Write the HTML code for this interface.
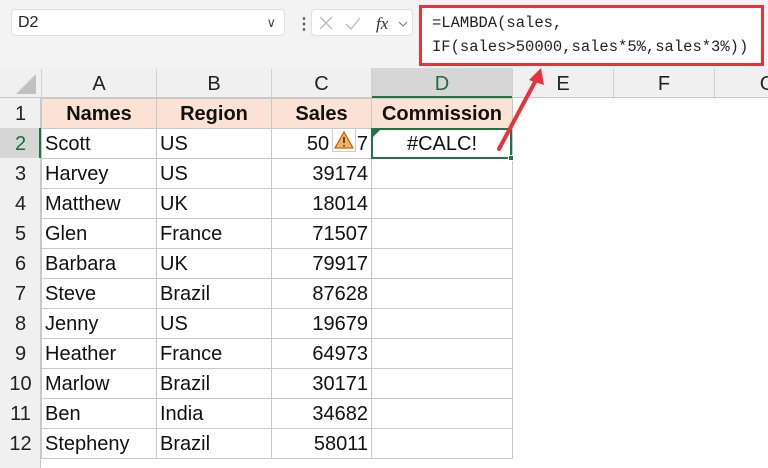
<!DOCTYPE html><html><head><style>
body{margin:0;width:768px;height:468px;overflow:hidden;background:#fff;font-family:"Liberation Sans",sans-serif;position:relative}
.a{position:absolute;box-sizing:border-box}
.c{position:absolute;box-sizing:border-box;font-size:20px;line-height:30px;color:#111;white-space:nowrap;overflow:visible}
</style></head><body>
<div class="a" style="left:0;top:0;width:768px;height:68px;background:#f3f3f3"></div>
<div class="a" style="left:11px;top:9px;width:274px;height:27px;background:#fff;border:1px solid #e0e0e0;border-radius:4px;font-size:16px;line-height:25px;padding-left:6px;color:#222">D2<span style="position:absolute;right:8px;top:0;color:#444;font-size:13px">&#8744;</span></div>
<div class="a" style="left:296px;top:14px;font-size:16px;color:#555;font-weight:bold">&#8942;</div>
<div class="a" style="left:311px;top:9px;width:102px;height:27px;background:#fff;border:1px solid #e0e0e0;border-radius:4px">
<svg width="100" height="27" style="position:absolute;left:0;top:0"><path d="M8 7l12 12M20 7L8 19" stroke="#bbb" stroke-width="1.3" fill="none"/><path d="M34 14l5 5 9-11" stroke="#bbb" stroke-width="1.3" fill="none"/><text x="64" y="19" font-family="Liberation Serif" font-style="italic" font-size="17" fill="#333">fx</text><path d="M87 12l4 4 4-4" stroke="#777" fill="none"/></svg></div>
<div class="a" style="left:419px;top:5px;width:345px;height:61px;background:#fff;border:3px solid #e8333b"></div>
<div class="a" style="left:432px;top:11px;font-family:'Liberation Mono',monospace;font-size:15.5px;line-height:24px;color:#222">=LAMBDA(sales,<br>IF(sales&gt;50000,sales*5%,sales*3%))</div>
<div class="a" style="left:0;top:68px;width:768px;height:30px;background:#f0f0f0;border-bottom:1px solid #c8c8c8"></div>
<div class="a" style="left:0;top:98px;width:41px;height:370px;background:#f0f0f0;border-right:1px solid #c8c8c8"></div>
<div class="a" style="left:371px;top:68px;width:141px;height:30px;background:#d6d6d6;border-bottom:2px solid #217346"></div>
<div class="a" style="left:0;top:128px;width:41px;height:30px;background:#d6d6d6;border-right:2px solid #217346"></div>
<svg class="a" style="left:14px;top:72px" width="24" height="24"><path d="M22 2V22H2Z" fill="#c0c0c0"/></svg>
<div id="g"></div>
<script>
var cols=[41,156,271,371,512,613,714,820],names=['A','B','C','D','E','F','G'];
var h='';
for(var i=0;i<7;i++){h+='<div class="c" style="left:'+cols[i]+'px;top:69px;width:'+(cols[i+1]-cols[i])+'px;text-align:center;color:'+(i==3?'#1e6b3c':'#222')+';border-left:1px solid #d0d0d0">'+names[i]+'</div>';}
var rows=[['Names','Region','Sales','Commission'],['Scott','US','50\u00a0\u00a0\u00a0\u00a0\u00a07','#CALC!'],['Harvey','US','39174',''],['Matthew','UK','18014',''],['Glen','France','71507',''],['Barbara','UK','79917',''],['Steve','Brazil','87628',''],['Jenny','US','19679',''],['Heather','France','64973',''],['Marlow','Brazil','30171',''],['Ben','India','34682',''],['Stepheny','Brazil','58011','']];
for(var r=0;r<12;r++){var y=98+r*30;
h+='<div class="c" style="left:0;top:'+(y+1)+'px;width:41px;text-align:center;color:'+(r==1?'#1e6b3c':'#222')+'">'+(r+1)+'</div>';
for(var c=0;c<4;c++){var st='left:'+cols[c]+'px;top:'+y+'px;width:'+(cols[c+1]-cols[c]+1)+'px;height:31px;border:1px solid #c8c8c8;padding:0 3px;';
if(r==0)st+='background:#fbe2d5;font-weight:bold;text-align:center;';else if(c==2)st+='text-align:right;padding-right:3px;';else if(c==3)st+='text-align:center;';
h+='<div class="c" style="'+st+'line-height:31px">'+rows[r][c]+'</div>';}}
document.getElementById('g').innerHTML=h;
</script>
<div class="a" style="left:371px;top:128px;width:141px;height:31px;border:2px solid #217346"></div>
<div class="a" style="left:508px;top:155px;width:6px;height:6px;background:#217346;border:1px solid #fff"></div>
<svg class="a" style="left:373px;top:130px" width="8" height="8"><path d="M0 0H7L0 7Z" fill="#217346"/></svg>
<div class="a" style="left:332px;top:128px;width:24px;height:24px;background:#fff;border:1px solid #ccc"><svg width="22" height="22"><path d="M11 3L20 19H2Z" fill="#f5b461" stroke="#c66a1a" stroke-width="1.3"/><path d="M11 8v6M11 16v1.5" stroke="#333" stroke-width="1.6"/></svg></div>
<svg class="a" style="left:0;top:0" width="768" height="468"><path d="M499 149L536 80" stroke="#e8333b" stroke-width="4" stroke-linecap="round"/><path d="M529 80L541 68 544 85Z" fill="#e8333b"/></svg>
</body></html>
